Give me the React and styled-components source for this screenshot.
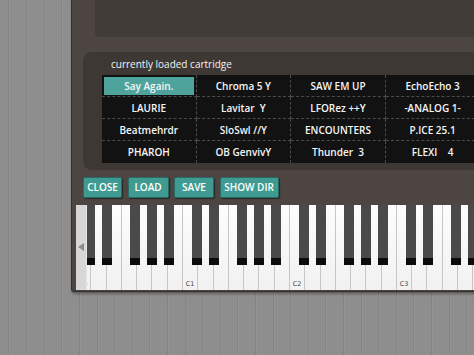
import React from "react";
import styled, { createGlobalStyle } from "styled-components";

const GlobalStyle = createGlobalStyle`
  html, body { margin: 0; padding: 0; }
  body {
    width: 474px;
    height: 355px;
    overflow: hidden;
    background-color: #8e8e8e;
    background-image: repeating-linear-gradient(
      90deg,
      transparent 0,
      transparent 8.5px,
      #848484 8.5px,
      #848484 9.5px,
      #939393 9.5px,
      #939393 10.5px,
      transparent 10.5px,
      transparent 17.6px
    );
    font-family: "Open Sans", "Noto Sans", sans-serif;
  }
`;

const Page = styled.div`
  display: flex;
  align-items: flex-start;
  width: 474px;
  height: 355px;
  padding-left: 71px;
  box-sizing: border-box;
  overflow: hidden;
`;

const Panel = styled.div`
  flex: 0 0 430px;
  height: 292px;
  box-sizing: border-box;
  background: #4c4541;
  border-left: 1px solid #37312e;
  border-bottom: 1px solid #37312e;
  border-bottom-left-radius: 3px;
  box-shadow: 1px 2px 3px rgba(0, 0, 0, 0.35);
  display: flex;
  flex-direction: column;
`;

const TopBox = styled.div`
  margin-left: 23px;
  height: 37px;
  background: #423c38;
  border-bottom-left-radius: 3px;
`;

const Section = styled.div`
  margin: 15px 0 0 11px;
  height: 118px;
  box-sizing: border-box;
  background: #3e3834;
  border-radius: 9px 0 0 9px;
  padding: 5px 0 0 19px;
`;

const SectionLabel = styled.div`
  height: 14px;
  line-height: 14px;
  padding-left: 9px;
  font-size: 10px;
  color: #f2f2f2;
`;

const Grid = styled.div`
  margin-top: 4px;
  display: grid;
  grid-template-columns: repeat(4, 94.6px);
  grid-auto-rows: 22.1px;
  background: #121212;
`;

const Cell = styled.div`
  box-sizing: border-box;
  display: flex;
  padding: 1.5px 2px;
  border-right: 1px dashed #4b4b4b;
  border-bottom: ${(p) => (p.$last ? "none" : "1px dashed #4b4b4b")};
`;

const CellLabel = styled.div`
  flex: 1;
  display: flex;
  align-items: center;
  justify-content: center;
  white-space: pre;
  font-size: 10px;
  font-weight: 600;
  color: #f6f6f6;
  background: ${(p) => (p.$selected ? "#4fa39d" : "transparent")};
`;

const ButtonRow = styled.div`
  display: flex;
  gap: 5.5px;
  margin: 7px 0 0 11px;
`;

const Button = styled.button`
  width: ${(p) => p.$w}px;
  height: 21px;
  padding: 0;
  box-sizing: border-box;
  background: #3f9b92;
  border: 1px solid #2a6964;
  border-radius: 2px;
  box-shadow: 1px 1px 1px rgba(0, 0, 0, 0.45);
  color: #ffffff;
  font-family: "Open Sans", "Noto Sans", sans-serif;
  font-size: 10px;
  font-weight: 600;
  line-height: 19px;
  white-space: nowrap;
  cursor: pointer;
`;

const Keyboard = styled.div`
  position: relative;
  margin: 7px 0 0 4px;
  height: 84.5px;
  display: flex;
  overflow: hidden;
  background: #f6f6f6;
`;

const WhiteKey = styled.div`
  position: relative;
  flex: 0 0 15.286px;
  box-sizing: border-box;
  border-right: 1px solid #c6c6c6;
  background: linear-gradient(#fdfdfd, #f1f1f1);
`;

const KeyLabel = styled.span`
  position: absolute;
  left: 0;
  right: 0;
  bottom: 2px;
  text-align: center;
  font-family: "DejaVu Sans", sans-serif;
  font-size: 6.5px;
  line-height: 8px;
  color: #4a4a4a;
`;

const BlackKey = styled.div`
  position: absolute;
  top: 0;
  width: 10px;
  height: 59.5px;
  box-sizing: border-box;
  background: #4a4a4a;
  border-bottom: 7px solid #0c0c0c;
  z-index: 1;
`;

const Strip = styled.div`
  position: absolute;
  left: 0;
  top: 0;
  bottom: 0;
  width: 11px;
  background: #d7d7d7;
  border-right: 1px solid #e6e6e6;
  z-index: 2;
  display: flex;
  align-items: center;
  padding-left: 2px;
  box-sizing: border-box;
`;

const Arrow = styled.div`
  width: 0;
  height: 0;
  border-top: 4.5px solid transparent;
  border-bottom: 4.5px solid transparent;
  border-right: 6px solid #8c8c8c;
`;

const cartridges = [
  "Say Again.", "Chroma 5 Y", "SAW EM UP", "EchoEcho 3",
  "LAURIE", "Lavitar  Y", "LFORez ++Y", "-ANALOG 1-",
  "Beatmehrdr", "SloSwl //Y", "ENCOUNTERS", "P.ICE 25.1",
  "PHAROH", "OB GenvivY", "Thunder  3", "FLEXI    4",
];

const buttons = [
  { label: "CLOSE", w: 39 },
  { label: "LOAD", w: 41 },
  { label: "SAVE", w: 40 },
  { label: "SHOW DIR", w: 59 },
];

const W = 15.286;
const blackOffsets = [
  { n: 1, d: -1.5 },
  { n: 2, d: 0.5 },
  { n: 4, d: -2.5 },
  { n: 5, d: -0.5 },
  { n: 6, d: 1.5 },
];

const whiteKeys = Array.from({ length: 28 }, (_, i) => ({
  i,
  label: i % 7 === 0 ? `C${i / 7}` : "",
}));

const blackKeys = [];
for (let o = 0; o < 4; o++) {
  blackOffsets.forEach(({ n, d }) => {
    blackKeys.push(o * 7 * W + n * W + d - 5);
  });
}

export default function App() {
  return (
    <>
      <GlobalStyle />
      <Page>
        <Panel>
          <TopBox />
          <Section>
            <SectionLabel>currently loaded cartridge</SectionLabel>
            <Grid>
              {cartridges.map((name, i) => (
                <Cell key={i} $last={i >= 12}>
                  <CellLabel $selected={i === 0}>{name}</CellLabel>
                </Cell>
              ))}
            </Grid>
          </Section>
          <ButtonRow>
            {buttons.map((b) => (
              <Button key={b.label} $w={b.w}>
                {b.label}
              </Button>
            ))}
          </ButtonRow>
          <Keyboard>
            {whiteKeys.map((k) => (
              <WhiteKey key={k.i}>
                {k.label && <KeyLabel>{k.label}</KeyLabel>}
              </WhiteKey>
            ))}
            {blackKeys.map((x, i) => (
              <BlackKey key={i} style={{ left: `${x}px` }} />
            ))}
            <Strip>
              <Arrow />
            </Strip>
          </Keyboard>
        </Panel>
      </Page>
    </>
  );
}
